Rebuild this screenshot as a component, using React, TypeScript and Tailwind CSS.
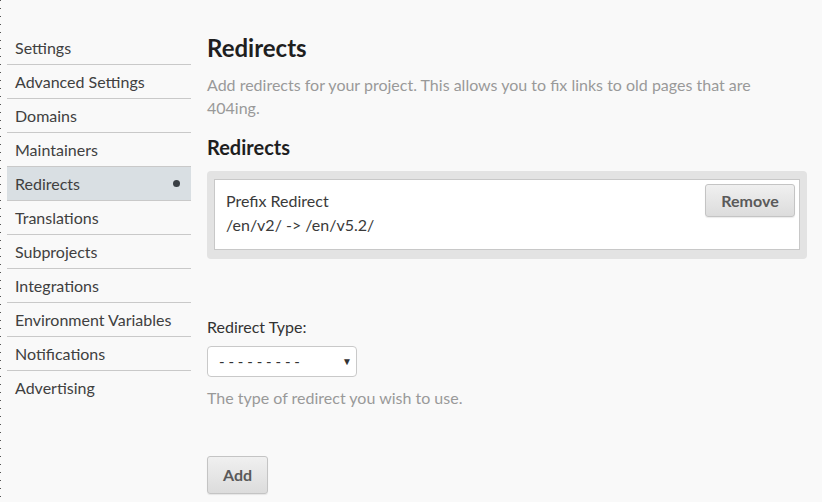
import React from "react";

const navItems = [
  "Settings",
  "Advanced Settings",
  "Domains",
  "Maintainers",
  "Redirects",
  "Translations",
  "Subprojects",
  "Integrations",
  "Environment Variables",
  "Notifications",
  "Advertising",
];

export default function App() {
  return (
    <div className="flex min-h-[502px] w-[822px] bg-[#f9f9f9] font-['Lato',sans-serif] text-[16px] text-[#404040]">
      {/* dotted left edge */}
      <div className="w-px shrink-0 bg-[repeating-linear-gradient(to_bottom,#555_0_1px,transparent_1px_8px)]" />

      {/* Sidebar */}
      <nav className="ml-[6px] mt-[31px] w-[184px] shrink-0">
        {navItems.map((item, i) => {
          const active = item === "Redirects";
          return (
            <div
              key={item}
              className={`flex h-[34px] items-center justify-between pl-2 pr-[11px] ${
                i < navItems.length - 1 ? "border-b border-[#c9c9c9]" : ""
              } ${active ? "bg-[#d9dfe3]" : ""}`}
            >
              <span>{item}</span>
              {active && <span className="h-[7px] w-[7px] rounded-full bg-[#3a3f44]" />}
            </div>
          );
        })}
      </nav>

      {/* Main */}
      <main className="ml-4 mr-[15px] flex-1 pt-[33px]">
        <h1 className="text-[24px] font-bold leading-[30px] text-[#1f1f1f]">Redirects</h1>
        <p className="mt-[10px] pr-[40px] leading-[23px] text-[#999]">
          Add redirects for your project. This allows you to fix links to old pages that are 404ing.
        </p>
        <h3 className="mt-[15px] text-[20px] font-bold leading-[26px] text-[#1f1f1f]">Redirects</h3>

        <div className="mt-[11px] rounded-[4px] bg-[#e3e3e3] px-[7px] pb-[9px] pt-[8px]">
          <div className="flex items-start justify-between border border-[#c8c8c8] bg-white pb-[12px] pl-[11px] pr-[4px] pt-[4px]">
            <div className="pt-[5px] leading-[24px] text-[#3a3a3a]">
              <div>Prefix Redirect</div>
              <div>/en/v2/ -&gt; /en/v5.2/</div>
            </div>
            <button className="h-[33px] w-[90px] rounded-[3px] border border-[#c4c4c4] bg-[linear-gradient(to_bottom,#f0f0f0,#dcdcdc)] text-[16px] font-bold text-[#5a5a5a] shadow-[0_1px_1px_rgba(0,0,0,0.08)]">
              Remove
            </button>
          </div>
        </div>

        <label className="mt-[58px] block leading-[20px] text-[#333]">Redirect Type:</label>
        <div className="mt-[9px] flex h-[31px] w-[150px] items-center justify-between rounded-[4px] border border-[#c9c9c9] bg-white pl-[11px] pr-[4px]">
          <span className="text-[15px] text-[#333]">- - - - - - - - -</span>
          <span className="text-[10px] text-[#333]">▼</span>
        </div>
        <p className="mt-[10px] leading-[22px] text-[#999]">The type of redirect you wish to use.</p>

        <button className="mt-[47px] h-[38px] w-[61px] rounded-[3px] border border-[#c4c4c4] bg-[linear-gradient(to_bottom,#f0f0f0,#dcdcdc)] text-[16px] font-bold text-[#5a5a5a] shadow-[0_1px_1px_rgba(0,0,0,0.08)]">
          Add
        </button>
      </main>
    </div>
  );
}
